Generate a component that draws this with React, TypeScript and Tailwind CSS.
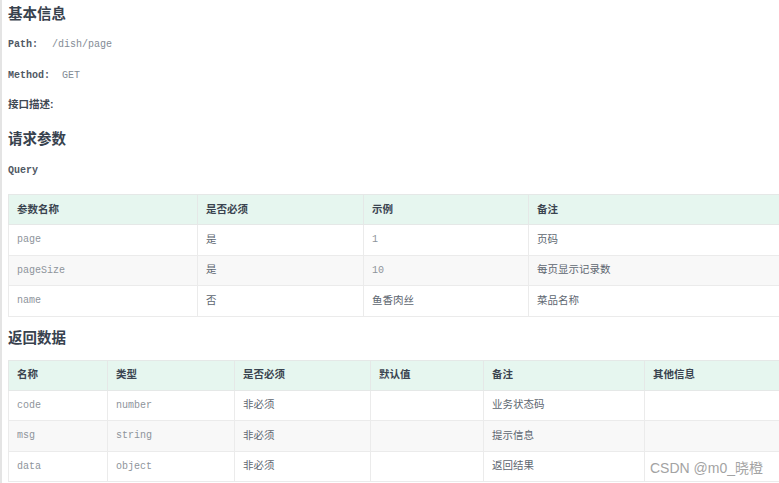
const mono = "font-['Liberation_Mono','Courier_New',monospace]";
const cjk = "font-['Liberation_Sans','Noto_Sans_CJK_SC',sans-serif]";

type Cell = { text: string; mono?: boolean };

function ApiTable({
  widths,
  head,
  rows,
}: {
  widths: number[];
  head: string[];
  rows: Cell[][];
}) {
  return (
    <table className="table-fixed border-collapse" style={{ width: widths.reduce((a, b) => a + b, 0) }}>
      <colgroup>
        {widths.map((w, i) => (
          <col key={i} style={{ width: w }} />
        ))}
      </colgroup>
      <thead>
        <tr className="h-[30px] bg-[#e6f6ef]">
          {head.map((h) => (
            <th
              key={h}
              className={`border border-[#e5e8e7] px-[8px] text-left text-[10.5px] font-bold text-[#3a4450] ${cjk}`}
            >
              {h}
            </th>
          ))}
        </tr>
      </thead>
      <tbody>
        {rows.map((row, r) => (
          <tr key={r} className={`h-[30.5px] ${r % 2 === 1 ? "bg-[#f8f8f8]" : "bg-white"}`}>
            {row.map((c, i) => (
              <td
                key={i}
                className={`border border-[#ebebeb] px-[8px] ${
                  c.mono
                    ? `${mono} text-[10px] text-[#8e949b]`
                    : `${cjk} text-[10.5px] text-[#5d6670]`
                }`}
              >
                {c.text}
              </td>
            ))}
          </tr>
        ))}
      </tbody>
    </table>
  );
}

export default function App() {
  return (
    <div className="relative h-[483px] w-[779px] overflow-hidden border-l-2 border-[#e4e4e4] bg-white pl-[6px]">
      <h2 className={`h-[28px] leading-[28px] text-[14.5px] font-bold text-[#38424e] ${cjk}`}>基本信息</h2>

      <div className={`mt-[6px] flex h-[20px] items-center text-[10px] ${mono}`}>
        <span className="font-bold text-[#4f5863]">Path:</span>
        <span className="ml-[14px] text-[#838b95]">/dish/page</span>
      </div>
      <div className={`mt-[11px] flex h-[20px] items-center text-[10px] ${mono}`}>
        <span className="font-bold text-[#4f5863]">Method:</span>
        <span className="ml-[12px] text-[#838b95]">GET</span>
      </div>
      <div className={`mt-[10px] flex h-[20px] items-center text-[10.5px] font-bold text-[#3f4853] ${cjk}`}>
        接口描述:
      </div>

      <h2 className={`mt-[10px] h-[28px] leading-[28px] text-[14.5px] font-bold text-[#38424e] ${cjk}`}>请求参数</h2>
      <div className={`mt-[7px] flex h-[20px] items-center text-[10px] font-bold text-[#4f5863] ${mono}`}>Query</div>

      <div className="mt-[14px]">
        <ApiTable
          widths={[189, 166, 165, 320]}
          head={["参数名称", "是否必须", "示例", "备注"]}
          rows={[
            [{ text: "page", mono: true }, { text: "是" }, { text: "1", mono: true }, { text: "页码" }],
            [{ text: "pageSize", mono: true }, { text: "是" }, { text: "10", mono: true }, { text: "每页显示记录数" }],
            [{ text: "name", mono: true }, { text: "否" }, { text: "鱼香肉丝" }, { text: "菜品名称" }],
          ]}
        />
      </div>

      <h2 className={`mt-[7px] h-[28px] leading-[28px] text-[14.5px] font-bold text-[#38424e] ${cjk}`}>返回数据</h2>

      <div className="mt-[8px]">
        <ApiTable
          widths={[99, 127, 136, 113, 161, 220]}
          head={["名称", "类型", "是否必须", "默认值", "备注", "其他信息"]}
          rows={[
            [{ text: "code", mono: true }, { text: "number", mono: true }, { text: "非必须" }, { text: "" }, { text: "业务状态码" }, { text: "" }],
            [{ text: "msg", mono: true }, { text: "string", mono: true }, { text: "非必须" }, { text: "" }, { text: "提示信息" }, { text: "" }],
            [{ text: "data", mono: true }, { text: "object", mono: true }, { text: "非必须" }, { text: "" }, { text: "返回结果" }, { text: "" }],
          ]}
        />
      </div>

      <div className={`absolute left-[648px] top-[458px] text-[14px] text-[#a3a3a3] ${cjk}`}>CSDN @m0_晓橙</div>
    </div>
  );
}
